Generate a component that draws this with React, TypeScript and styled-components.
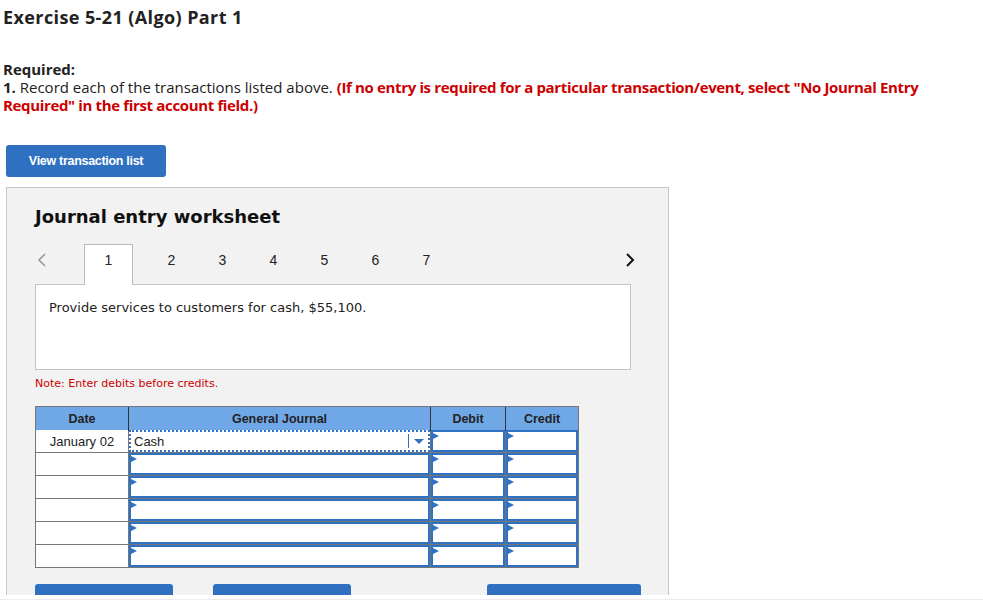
import React from "react";
import styled, { createGlobalStyle } from "styled-components";

const GlobalStyle = createGlobalStyle`
  html, body {
    margin: 0;
    padding: 0;
    background: #fff;
  }
  body {
    font-family: "Open Sans", "Liberation Sans", Arial, sans-serif;
    color: #222;
  }
`;

const Page = styled.div`
  height: 595px;
  overflow: hidden;
  padding: 0 0 0 3px;
  box-sizing: border-box;
`;

const Footer = styled.div`
  height: 11px;
  border-top: 4px solid #fff;
  box-sizing: border-box;
  div {
    height: 1px;
    background: #ececec;
  }
`;

const Title = styled.h1`
  margin: 0;
  padding-top: 6px;
  font-size: 18px;
  line-height: 22px;
  font-weight: 700;
  color: #222;
  letter-spacing: 0.4px;
`;

const Required = styled.div`
  margin-top: 32px;
  width: 935px;
  font-size: 15px;
  line-height: 18px;
  b {
    font-weight: 700;
  }
  strong {
    color: #c00;
    font-weight: 700;
    letter-spacing: -0.35px;
  }
`;

const BlueButton = styled.button<{ $w?: number }>`
  display: block;
  width: ${(p) => p.$w ?? 160}px;
  height: 32px;
  border: none;
  border-radius: 3px;
  background: #2f70c1;
  color: #fff;
  font-family: "Liberation Sans", Arial, sans-serif;
  font-weight: 700;
  font-size: 12.5px;
  letter-spacing: -0.3px;
  padding: 0;
  cursor: pointer;
`;

const TopButton = styled(BlueButton)`
  margin: 31px 0 0 3px;
`;

const Panel = styled.div`
  margin: 10px 0 0 3px;
  width: 663px;
  height: 500px;
  box-sizing: border-box;
  background: #f2f2f2;
  border: 1px solid #c8c8c8;
  padding: 18px 0 0 28px;
  font-family: "DejaVu Sans", Verdana, sans-serif;
`;

const WorksheetTitle = styled.h2`
  margin: 0;
  font-size: 18px;
  line-height: 22px;
  font-weight: 700;
  color: #111;
`;

const TabBar = styled.div`
  margin-top: 16px;
  width: 605px;
  height: 41px;
  display: flex;
  align-items: flex-start;
  position: relative;
  z-index: 1;
`;

const Chevron = styled.div<{ $right?: boolean }>`
  width: 49px;
  height: 32px;
  display: flex;
  align-items: center;
  justify-content: ${(p) => (p.$right ? "flex-end" : "flex-start")};
  padding-left: ${(p) => (p.$right ? 0 : 1)}px;
  margin-left: ${(p) => (p.$right ? "auto" : 0)};
  padding-right: ${(p) => (p.$right ? 4 : 0)}px;
  box-sizing: border-box;
`;

const Tab = styled.div<{ $active?: boolean }>`
  width: ${(p) => (p.$active ? 49 : 51)}px;
  height: 41px;
  box-sizing: border-box;
  margin-right: ${(p) => (p.$active ? 13 : 0)}px;
  display: flex;
  justify-content: center;
  padding-top: 7px;
  font-family: "Liberation Sans", Arial, sans-serif;
  font-size: 14px;
  color: #222;
  background: ${(p) => (p.$active ? "#fff" : "transparent")};
  border: ${(p) => (p.$active ? "1px solid #b9b9b9" : "1px solid transparent")};
  border-bottom: none;
`;

const Description = styled.div`
  margin-top: -1px;
  width: 596px;
  height: 86px;
  box-sizing: border-box;
  background: #fff;
  border: 1px solid #c4c4c4;
  padding: 15px 0 0 13px;
  font-size: 13px;
  line-height: 16px;
  color: #222;
`;

const Note = styled.div`
  margin-top: 7px;
  font-size: 11px;
  line-height: 14px;
  color: #c00;
`;

const Journal = styled.div`
  margin-top: 15px;
  width: 544px;
  box-sizing: border-box;
  display: grid;
  grid-template-columns: 92px 301px 74px 72px;
  grid-auto-rows: 22px;
  gap: 1px;
  padding: 1px;
  background: #777;
  font-family: "Liberation Sans", Arial, sans-serif;
`;

const HeadCell = styled.div`
  height: 24px;
  background: #70a8e7;
  box-shadow: 1px 0 0 #333;
  display: flex;
  align-items: center;
  justify-content: center;
  font-size: 12.5px;
  font-weight: 700;
  color: #222;
  &:nth-child(4) {
    box-shadow: none;
  }
`;

const HeadRow = styled.div`
  display: contents;
`;

const DateCell = styled.div`
  background: #fff;
  display: flex;
  align-items: center;
  justify-content: center;
  font-size: 13px;
  color: #222;
`;

const Field = styled.div<{ $focus?: boolean }>`
  position: relative;
  box-sizing: border-box;
  border: 2px ${(p) => (p.$focus ? "dotted" : "solid")} #2f72c4;
  background: #fff;
  display: flex;
  align-items: center;
  font-size: 13px;
  color: #222;
  padding-left: 3px;
`;

const Marker = styled.span`
  position: absolute;
  left: 0;
  top: 1px;
  width: 0;
  height: 0;
  border-top: 3.5px solid transparent;
  border-bottom: 3.5px solid transparent;
  border-left: 6px solid #2f72c4;
`;

const SelectArrow = styled.span`
  margin-left: auto;
  width: 19px;
  height: 14px;
  border-left: 1px solid #2f72c4;
  display: flex;
  align-items: center;
  justify-content: center;
  &::after {
    content: "";
    border-left: 5px solid transparent;
    border-right: 5px solid transparent;
    border-top: 5px solid #2f72c4;
  }
`;

const ActionRow = styled.div`
  margin-top: 16px;
  display: flex;
`;

const ActionButton = styled(BlueButton)<{ $gap: number }>`
  margin-right: ${(p) => p.$gap}px;
`;

const rows = [0, 1, 2, 3, 4, 5];

export default function App() {
  return (
    <>
      <GlobalStyle />
      <Page>
        <Title>Exercise 5-21 (Algo) Part 1</Title>
        <Required>
          <div>
            <b>Required:</b>
          </div>
          <div>
            <b>1.</b> Record each of the transactions listed above.{" "}
            <strong>
              (If no entry is required for a particular transaction/event, select "No Journal
              Entry Required" in the first account field.)
            </strong>
          </div>
        </Required>
        <TopButton $w={160}>View transaction list</TopButton>
        <Panel>
          <WorksheetTitle>Journal entry worksheet</WorksheetTitle>
          <TabBar>
            <Chevron>
              <svg width="12" height="16" viewBox="0 0 12 16">
                <polyline points="9,2 3,8 9,14" fill="none" stroke="#999" strokeWidth="1.6" />
              </svg>
            </Chevron>
            {[1, 2, 3, 4, 5, 6, 7].map((n) => (
              <Tab key={n} $active={n === 1}>
                {n}
              </Tab>
            ))}
            <Chevron $right>
              <svg width="12" height="16" viewBox="0 0 12 16">
                <polyline points="3,2 9,8 3,14" fill="none" stroke="#111" strokeWidth="2" />
              </svg>
            </Chevron>
          </TabBar>
          <Description>Provide services to customers for cash, $55,100.</Description>
          <Note>Note: Enter debits before credits.</Note>
          <Journal>
            <HeadRow>
              <HeadCell>Date</HeadCell>
              <HeadCell>General Journal</HeadCell>
              <HeadCell>Debit</HeadCell>
              <HeadCell>Credit</HeadCell>
            </HeadRow>
            {rows.map((r) => (
              <React.Fragment key={r}>
                <DateCell>{r === 0 ? "January 02" : ""}</DateCell>
                {r === 0 ? (
                  <Field $focus>
                    Cash
                    <SelectArrow />
                  </Field>
                ) : (
                  <Field>
                    <Marker />
                  </Field>
                )}
                <Field>
                  <Marker />
                </Field>
                <Field>
                  <Marker />
                </Field>
              </React.Fragment>
            ))}
          </Journal>
          <ActionRow>
            <ActionButton $w={138} $gap={40} aria-label="Record entry" />
            <ActionButton $w={138} $gap={136} aria-label="Clear entry" />
            <ActionButton $w={154} $gap={0} aria-label="View general journal" />
          </ActionRow>
        </Panel>
      </Page>
      <Footer>
        <div />
      </Footer>
    </>
  );
}
